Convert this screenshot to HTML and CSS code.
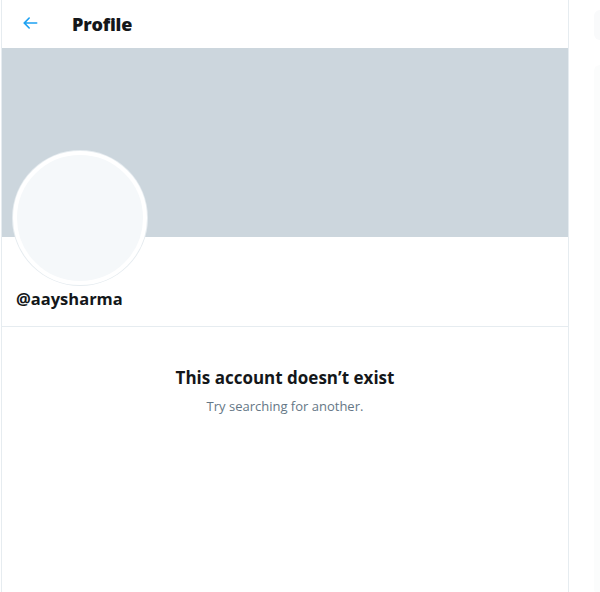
FILE: index.html
```html
<!DOCTYPE html>
<html>
<head>
<meta charset="utf-8">
<link rel="stylesheet" href="styles.css">
</head>
<body>
<div class="page">
  <main class="column">
    <header class="topbar">
      <div class="back">
        <svg viewBox="0 0 24 24" width="20" height="20"><path d="M20 11H7.414l4.293-4.293a1 1 0 0 0-1.414-1.414l-6 6a1 1 0 0 0 0 1.414l6 6a1 1 0 0 0 1.414-1.414L7.414 13H20a1 1 0 1 0 0-2z" fill="#1da1f2"/></svg>
      </div>
      <h1 class="title">Profile</h1>
    </header>
    <div class="banner"></div>
    <section class="info">
      <div class="avatar"></div>
      <div class="handle">@aaysharma</div>
    </section>
    <section class="empty">
      <div class="empty-title">This account doesn’t exist</div>
      <div class="empty-sub">Try searching for another.</div>
    </section>
  </main>
  <aside class="side">
    <div class="search"></div>
    <div class="panel"></div>
  </aside>
</div>
</body>
</html>
```
FILE: styles.css
```css
html, body {
  margin: 0;
  padding: 0;
  background: #fff;
  font-family: "Open Sans", "Noto Sans", sans-serif;
  color: #14171a;
}
.page {
  display: flex;
  height: 592px;
  overflow: hidden;
}
.column {
  width: 566px;
  margin-left: 1px;
  border-left: 1px solid #e6ecf0;
  border-right: 1px solid #e6ecf0;
  display: flex;
  flex-direction: column;
  flex-shrink: 0;
}
.topbar {
  height: 48px;
  display: flex;
  align-items: center;
  box-sizing: border-box;
}
.back {
  width: 20px;
  height: 20px;
  margin-left: 18px;
  margin-right: 32px;
  margin-top: -2px;
}
.back svg { display: block; }
.title {
  margin: 0;
  font-size: 18px;
  font-weight: 800;
  letter-spacing: -0.2px;
}
.banner {
  height: 189px;
  background: #ccd6dd;
}
.info {
  position: relative;
  height: 90px;
  border-bottom: 1px solid #e6ecf0;
  box-sizing: border-box;
  padding-left: 14px;
  padding-top: 50px;
}
.avatar {
  position: absolute;
  left: 11px;
  top: -86px;
  width: 126px;
  height: 126px;
  border-radius: 50%;
  background: #f5f8fa;
  border: 4px solid #fff;
  box-shadow: 0 0 0 1px #e6ecf0;
}
.handle {
  font-size: 16.5px;
  font-weight: 700;
  letter-spacing: 0;
}
.empty {
  padding-top: 39px;
  text-align: center;
}
.empty-title {
  font-size: 17px;
  font-weight: 700;
  letter-spacing: 0;
}
.empty-sub {
  margin-top: 8px;
  font-size: 13px;
  color: #657786;
}
.side {
  flex: 1;
  padding-left: 25px;
  padding-top: 10px;
}
.search {
  height: 30px;
  background: #f9fafb;
  border-radius: 16px 0 0 16px;
}
.panel {
  margin-top: 25px;
  height: 530px;
  background: #fbfcfc;
  border-radius: 10px 0 0 10px;
}
```
